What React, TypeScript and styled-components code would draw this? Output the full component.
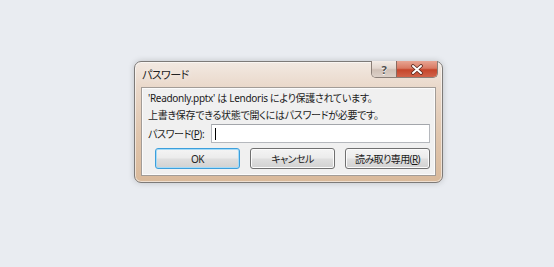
import React from 'react';
import styled, { createGlobalStyle } from 'styled-components';

const GlobalStyle = createGlobalStyle`
  html, body {
    margin: 0;
    padding: 0;
    background: #e9ecf1;
  }
  body {
    font-family: "Noto Sans", "Noto Sans CJK JP", sans-serif;
    font-feature-settings: "palt";
    color: #1b1b1b;
  }
`;

const Page = styled.div`
  width: 554px;
  height: 267px;
  padding: 61px 0 0 134px;
  box-sizing: border-box;
`;

const Window = styled.div`
  width: 309px;
  height: 122px;
  box-sizing: border-box;
  border: 1px solid #7d7a78;
  border-radius: 7px;
  padding: 0 6px 6px 6px;
  display: flex;
  flex-direction: column;
  background: linear-gradient(180deg, #f2e9e2 0%, #ead9cb 20%, #e0c6ae 60%, #d9b99a 100%);
  box-shadow: inset 0 0 0 1px rgba(255, 255, 255, 0.55), 0 0 6px rgba(0, 0, 0, 0.18);
`;

const TitleBar = styled.div`
  height: 25px;
  display: flex;
  align-items: flex-start;
  justify-content: space-between;
`;

const Title = styled.span`
  font-size: 11px;
  line-height: 12px;
  margin: 7px 0 0 1px;
  color: #222;
  letter-spacing: -0.6px;
  text-shadow: 0 0 6px rgba(255, 255, 255, 0.9);
`;

const CaptionButtons = styled.div`
  display: flex;
  margin: -1px -2px 0 0;
  border: 1px solid #8a7f78;
  border-top: none;
  border-radius: 0 0 5px 5px;
  overflow: hidden;
  height: 16px;
`;

const CaptionButton = styled.div<{ $close?: boolean }>`
  width: ${(p) => (p.$close ? 41 : 24)}px;
  height: 16px;
  display: flex;
  align-items: center;
  justify-content: center;
  box-sizing: border-box;
  font-size: 11px;
  font-weight: bold;
  color: #4c4c4c;
  border-left: ${(p) => (p.$close ? '1px solid #8a6a60' : 'none')};
  background: ${(p) =>
    p.$close
      ? 'linear-gradient(180deg, #e8a593 0%, #d97a63 45%, #c5452b 55%, #d0634a 100%)'
      : 'linear-gradient(180deg, #f3ece7 0%, #e2d6ce 45%, #cfc0b6 55%, #dcd0c8 100%)'};
  text-shadow: 0 1px 0 #fff;
`;

const Panel = styled.div`
  flex: 1;
  background: #f0f0f0;
  border: 1px solid #a29c97;
  box-shadow: inset 0 0 0 1px #fbfbfb;
  padding: 2px 5px 0 6px;
  display: flex;
  flex-direction: column;
  font-size: 10px;
`;

const Message = styled.div`
  line-height: 17px;
  white-space: nowrap;
  letter-spacing: -0.3px;
`;

const FieldRow = styled.div`
  display: flex;
  align-items: center;
  gap: 7px;
`;

const FieldLabel = styled.span`
  white-space: nowrap;
  letter-spacing: -0.4px;
`;

const Underline = styled.span`
  text-decoration: underline;
  text-underline-offset: 1px;
`;

const TextBox = styled.div`
  flex: 1;
  height: 19px;
  box-sizing: border-box;
  background: #fff;
  border: 1px solid #b5b8bd;
  border-top-color: #a3a6ab;
  display: flex;
  align-items: center;
  padding-left: 3px;
`;

const Caret = styled.span`
  width: 1px;
  height: 12px;
  background: #000;
`;

const ButtonRow = styled.div`
  display: flex;
  justify-content: flex-end;
  gap: 10px;
  margin-top: 5px;
`;

const Button = styled.div<{ $default?: boolean }>`
  width: 85px;
  height: 21px;
  box-sizing: border-box;
  display: flex;
  align-items: center;
  justify-content: center;
  border-radius: 3px;
  font-size: 10px;
  letter-spacing: -0.6px;
  border: 1px solid ${(p) => (p.$default ? '#3c9fdc' : '#707070')};
  background: linear-gradient(180deg, #f4f4f4 0%, #ececec 45%, #dedede 55%, #d1d1d1 100%);
  box-shadow: ${(p) =>
    p.$default ? 'inset 0 0 0 1px #a6dbf7' : 'inset 0 0 0 1px #fbfbfb'};
`;

export default function App() {
  return (
    <>
      <GlobalStyle />
      <Page>
        <Window>
          <TitleBar>
            <Title>パスワード</Title>
            <CaptionButtons>
              <CaptionButton>?</CaptionButton>
              <CaptionButton $close>
                <svg width="14" height="11" viewBox="0 0 14 11">
                  <path
                    d="M3 2 L11 9 M11 2 L3 9"
                    stroke="#5a2a20"
                    strokeWidth="3.6"
                    strokeLinecap="round"
                  />
                  <path
                    d="M3 2 L11 9 M11 2 L3 9"
                    stroke="#fff"
                    strokeWidth="2"
                    strokeLinecap="round"
                  />
                </svg>
              </CaptionButton>
            </CaptionButtons>
          </TitleBar>
          <Panel>
            <Message>'Readonly.pptx' は Lendoris により保護されています。</Message>
            <Message>上書き保存できる状態で開くにはパスワードが必要です。</Message>
            <FieldRow>
              <FieldLabel>
                パスワード(<Underline>P</Underline>):
              </FieldLabel>
              <TextBox>
                <Caret />
              </TextBox>
            </FieldRow>
            <ButtonRow>
              <Button $default>OK</Button>
              <Button>キャンセル</Button>
              <Button>
                読み取り専用(<Underline>R</Underline>)
              </Button>
            </ButtonRow>
          </Panel>
        </Window>
      </Page>
    </>
  );
}
